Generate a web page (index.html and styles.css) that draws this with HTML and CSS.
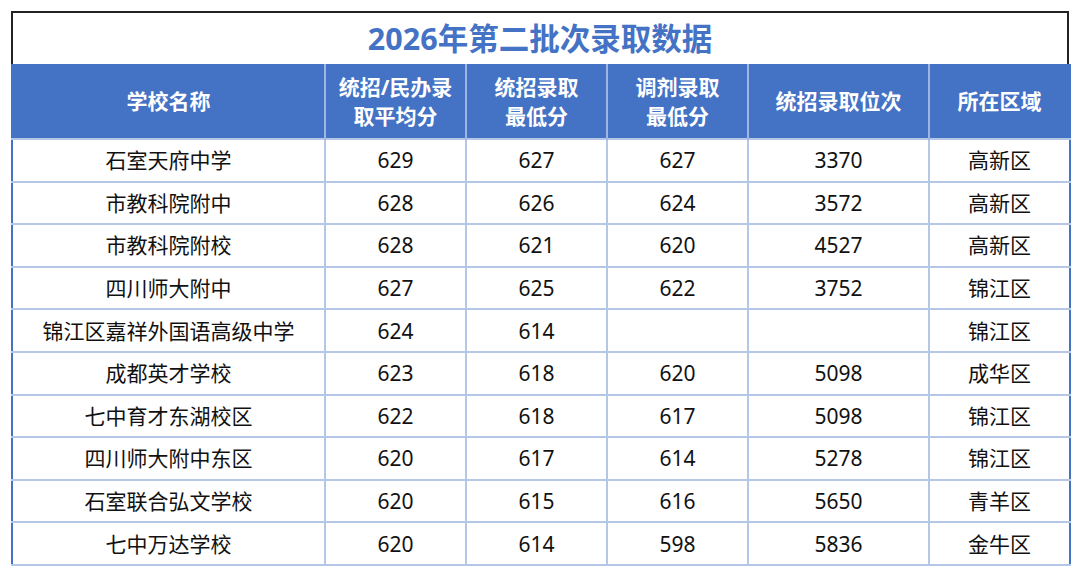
FILE: index.html
```html
<!DOCTYPE html>
<html lang="zh-CN">
<head>
<meta charset="utf-8">
<title>2026年第二批次录取数据</title>
<link rel="stylesheet" href="styles.css">
</head>
<body>
<div class="sheet">
  <div class="title">2026年第二批次录取数据</div>
  <table class="grid">
    <colgroup>
      <col class="c-name">
      <col class="c-n">
      <col class="c-n">
      <col class="c-n">
      <col class="c-rank">
      <col class="c-n">
    </colgroup>
    <thead>
      <tr>
        <th>学校名称</th>
        <th>统招/民办录<br>取平均分</th>
        <th>统招录取<br>最低分</th>
        <th>调剂录取<br>最低分</th>
        <th>统招录取位次</th>
        <th>所在区域</th>
      </tr>
    </thead>
    <tbody>
      <tr><td>石室天府中学</td><td>629</td><td>627</td><td>627</td><td>3370</td><td>高新区</td></tr>
      <tr><td>市教科院附中</td><td>628</td><td>626</td><td>624</td><td>3572</td><td>高新区</td></tr>
      <tr><td>市教科院附校</td><td>628</td><td>621</td><td>620</td><td>4527</td><td>高新区</td></tr>
      <tr><td>四川师大附中</td><td>627</td><td>625</td><td>622</td><td>3752</td><td>锦江区</td></tr>
      <tr><td>锦江区嘉祥外国语高级中学</td><td>624</td><td>614</td><td></td><td></td><td>锦江区</td></tr>
      <tr><td>成都英才学校</td><td>623</td><td>618</td><td>620</td><td>5098</td><td>成华区</td></tr>
      <tr><td>七中育才东湖校区</td><td>622</td><td>618</td><td>617</td><td>5098</td><td>锦江区</td></tr>
      <tr><td>四川师大附中东区</td><td>620</td><td>617</td><td>614</td><td>5278</td><td>锦江区</td></tr>
      <tr><td>石室联合弘文学校</td><td>620</td><td>615</td><td>616</td><td>5650</td><td>青羊区</td></tr>
      <tr><td>七中万达学校</td><td>620</td><td>614</td><td>598</td><td>5836</td><td>金牛区</td></tr>
    </tbody>
  </table>
</div>
</body>
</html>
```

FILE: styles.css
```css
html, body {
  margin: 0;
  padding: 0;
  background: #ffffff;
}

body {
  font-family: "Noto Sans", "Noto Sans CJK SC", sans-serif;
  color: #111111;
}

.sheet {
  margin: 11px 0 0 11px;
  width: 1058px;
}

.title {
  box-sizing: border-box;
  height: 53px;
  border: 2px solid #222222;
  border-bottom: none;
  display: flex;
  align-items: center;
  justify-content: center;
  color: #4472c4;
  font-size: 30.5px;
  font-weight: 700;
  padding-bottom: 3px;
}

.grid {
  width: 1058px;
  border-collapse: collapse;
  table-layout: fixed;
  border-left: 2px solid #4472c4;
  border-right: 2px solid #4472c4;
  border-bottom: 2px solid #b4c7e7;
}

.c-name { width: 313px; }
.c-n { width: 141px; }
.c-rank { width: 181px; }

.grid th {
  background: #4472c4;
  color: #ffffff;
  font-size: 21px;
  font-weight: 700;
  line-height: 29px;
  height: 69px;
  padding: 3px 2px 2px;
  text-align: center;
  border-left: 2px solid #9fb6e3;
}

.grid th:first-child {
  border-left: none;
}

.grid td {
  height: 40.6px;
  padding: 0;
  text-align: center;
  font-size: 21px;
  line-height: 28px;
  border-left: 2px solid #b4c7e7;
  border-top: 2px solid #b4c7e7;
  color: #111111;
}

.grid td:first-child {
  border-left: none;
}
```
